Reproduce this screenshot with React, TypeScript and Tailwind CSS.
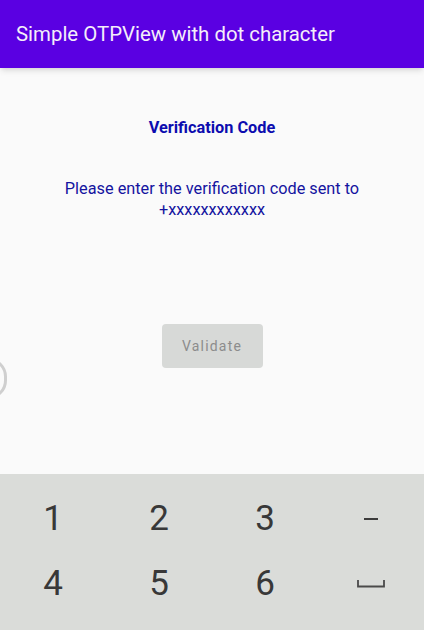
import React from 'react';

const keys = [
  ['1', '2', '3', 'minus'],
  ['4', '5', '6', 'space'],
];

const KeyFace: React.FC<{ k: string }> = ({ k }) => {
  if (k === 'minus') {
    return <div className="h-[2px] w-[14px] bg-[#3c3c3c]" />;
  }
  if (k === 'space') {
    return (
      <svg width="28" height="9" viewBox="0 0 28 9" fill="none">
        <path d="M1 1V7.5H27V1" stroke="#4a4a4a" strokeWidth="1.8" />
      </svg>
    );
  }
  return <span className="text-[35px] leading-none text-[#383838]">{k}</span>;
};

const App: React.FC = () => {
  return (
    <div
      className="relative h-[630px] w-[424px] overflow-hidden bg-[#fafafa]"
      style={{ fontFamily: 'Roboto, "Liberation Sans", sans-serif' }}
    >
      <header className="relative z-10 flex h-[68px] items-center bg-[#5a00e2] px-4 shadow-md">
        <h1 className="text-[20.4px] text-[#f4eefa]">Simple OTPView with dot character</h1>
      </header>

      <main className="flex h-[406px] flex-col items-center pt-[49px]">
        <h2 className="text-[16.3px] leading-[22px] font-bold text-[#0c0caf]">Verification Code</h2>
        <p className="mt-[39px] text-center text-[16.3px] leading-[21px] text-[#1414a0]">
          Please enter the verification code sent to
          <br />
          +xxxxxxxxxxxx
        </p>
        <button className="mt-[104px] h-[44px] w-[101px] rounded-[4px] bg-[#d7d9d7] text-[14px] tracking-[1.2px] text-[#8c8c8c]">
          Validate
        </button>
      </main>

      <div className="absolute left-[-30px] top-[358px] h-[41px] w-[37px] rounded-full border-[3px] border-[#cfcfcf]" />

      <section className="h-[156px] bg-[#dadcd9] pt-[12px]">
        {keys.map((row, i) => (
          <div key={i} className="grid h-[65px] grid-cols-4">
            {row.map((k) => (
              <div key={k} className="flex items-center justify-center">
                <KeyFace k={k} />
              </div>
            ))}
          </div>
        ))}
      </section>
    </div>
  );
};

export default App;
